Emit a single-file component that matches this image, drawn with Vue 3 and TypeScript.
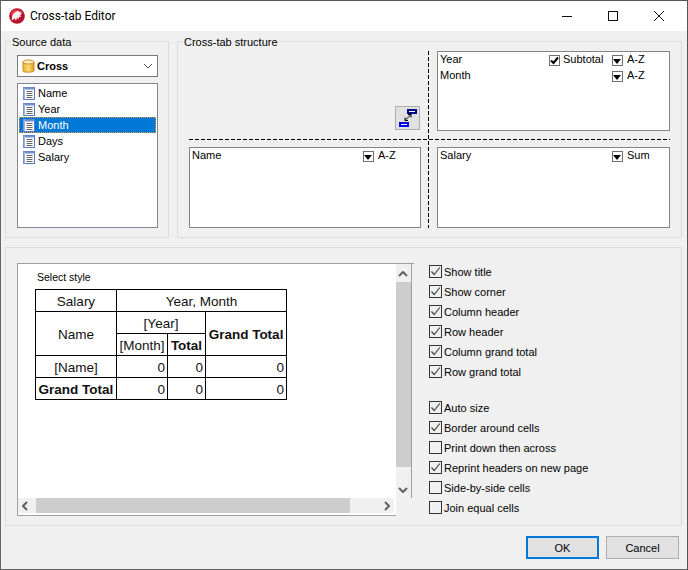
<script setup lang="ts">
const fields: string[] = ['Name', 'Year', 'Month', 'Days', 'Salary']
const groupA: string[] = ['Show title', 'Show corner', 'Column header', 'Row header', 'Column grand total', 'Row grand total']
const groupB: { label: string; on: boolean }[] = [
  { label: 'Auto size', on: true },
  { label: 'Border around cells', on: true },
  { label: 'Print down then across', on: false },
  { label: 'Reprint headers on new page', on: true },
  { label: 'Side-by-side cells', on: false },
  { label: 'Join equal cells', on: false },
]
</script>

<template>
  <div class="window">
    <header class="titlebar">
      <svg class="logo" width="16" height="16" viewBox="0 0 16 16">
        <circle cx="8" cy="8" r="7.8" fill="#b8102a" />
        <circle cx="6.5" cy="6" r="4.5" fill="#e23a4c" />
        <path d="M3 12.5C2 8 5 3 10.5 2.5L9.3 4 13 3.4 11.2 5.3 13.6 5.5 11 7.2 12.6 8.4 9.8 8.9 10 11.5 8.2 9.8 6.8 13 6 10.5 4.5 11.2Z" fill="#fdeeee" />
      </svg>
      <span class="title">Cross-tab Editor</span>
      <div class="winbtns">
        <svg width="12" height="12" viewBox="0 0 12 12"><path d="M1 6.5H11" stroke="#111" fill="none" /></svg>
        <svg width="12" height="12" viewBox="0 0 12 12"><rect x="1.5" y="1.5" width="9" height="9" stroke="#111" fill="none" /></svg>
        <svg width="12" height="12" viewBox="0 0 12 12"><path d="M1 1L11 11M11 1L1 11" stroke="#111" fill="none" /></svg>
      </div>
    </header>

    <main class="body">
      <div class="top">
        <section class="group source">
          <span class="legend">Source data</span>
          <div class="combo">
            <svg width="13" height="15" viewBox="0 0 13 15">
              <defs>
                <linearGradient id="db" x1="0" x2="1" y1="0" y2="0">
                  <stop offset="0" stop-color="#f0b030" />
                  <stop offset="0.5" stop-color="#ffdc78" />
                  <stop offset="1" stop-color="#dd9a20" />
                </linearGradient>
              </defs>
              <path d="M1 3V12C1 13.5 12 13.5 12 12V3Z" fill="url(#db)" stroke="#c88a1c" />
              <ellipse cx="6.5" cy="3" rx="5.5" ry="2" fill="#fff0c0" stroke="#c88a1c" />
            </svg>
            <b>Cross</b>
            <svg class="chev" width="10" height="6" viewBox="0 0 10 6"><path d="M1 1L5 5L9 1" stroke="#555" fill="none" /></svg>
          </div>
          <ul class="fields">
            <li v-for="f in fields" :key="f" :class="{ sel: f === 'Month' }">
              <svg width="12" height="13" viewBox="0 0 12 13">
                <rect x="0.5" y="0.5" width="11" height="12" fill="#fff" stroke="#5a78c0" />
                <rect x="0.5" y="0.5" width="11" height="2" fill="#6d8fd8" />
                <rect x="0.5" y="0.5" width="1.5" height="12" fill="#9db4e6" />
                <path d="M3.5 4.5H9.5M3.5 6.5H9.5M3.5 8.5H9.5M3.5 10.5H9.5" stroke="#666" />
              </svg>
              <span>{{ f }}</span>
            </li>
          </ul>
        </section>

        <section class="group structure">
          <span class="legend">Cross-tab structure</span>
          <div class="cell corner">
            <button class="swap">
              <svg width="22" height="22" viewBox="0 0 22 22">
                <rect x="10" y="2" width="10" height="5" fill="#000080" />
                <rect x="12" y="4" width="6" height="1" fill="#fff" />
                <rect x="2" y="15" width="10" height="5" fill="#0000f0" />
                <rect x="4" y="17" width="6" height="1" fill="#fff" />
                <path d="M8 13.5L14 7.5M11 7.5H14V10.5M8 10.5V13.5H11" stroke="#000" fill="none" />
              </svg>
            </button>
          </div>
          <div class="cell drop">
            <div class="row">
              <span class="name">Year</span>
              <span class="tick"><svg width="11" height="11" viewBox="0 0 11 11"><path d="M2 5.5L4.5 8L9 2.5" stroke="#000" stroke-width="2" fill="none" /></svg></span>
              <span class="sub">Subtotal</span>
              <span class="arrow"></span><span class="val">A-Z</span>
            </div>
            <div class="row">
              <span class="name">Month</span>
              <span class="arrow"></span><span class="val">A-Z</span>
            </div>
          </div>
          <div class="cell drop">
            <div class="row">
              <span class="name">Name</span>
              <span class="arrow"></span><span class="val">A-Z</span>
            </div>
          </div>
          <div class="cell drop">
            <div class="row">
              <span class="name">Salary</span>
              <span class="arrow"></span><span class="val">Sum</span>
            </div>
          </div>
          <i class="dash-v"></i>
          <i class="dash-h"></i>
        </section>
      </div>

      <section class="group options">
        <div class="preview">
          <div class="canvas">
            <div class="caption">Select style</div>
            <table class="sample">
              <colgroup>
                <col style="width: 81px" /><col style="width: 51px" /><col style="width: 38px" /><col style="width: 81px" />
              </colgroup>
              <tbody>
                <tr><td>Salary</td><td colspan="3">Year, Month</td></tr>
                <tr><td rowspan="2">Name</td><td colspan="2">[Year]</td><td rowspan="2"><b>Grand Total</b></td></tr>
                <tr><td>[Month]</td><td><b>Total</b></td></tr>
                <tr><td>[Name]</td><td class="num">0</td><td class="num">0</td><td class="num">0</td></tr>
                <tr><td><b>Grand Total</b></td><td class="num">0</td><td class="num">0</td><td class="num">0</td></tr>
              </tbody>
            </table>
          </div>
          <div class="vbar">
            <svg width="10" height="6" viewBox="0 0 10 6"><path d="M1 5L5 1L9 5" stroke="#606060" stroke-width="2" fill="none" /></svg>
            <div class="vthumb"></div>
            <svg width="10" height="6" viewBox="0 0 10 6"><path d="M1 1L5 5L9 1" stroke="#606060" stroke-width="2" fill="none" /></svg>
          </div>
          <div class="hwrap">
            <div class="hbar">
              <svg width="6" height="10" viewBox="0 0 6 10"><path d="M5 1L1 5L5 9" stroke="#606060" stroke-width="2" fill="none" /></svg>
              <div class="htrack"><div class="hthumb"></div></div>
              <svg width="6" height="10" viewBox="0 0 6 10"><path d="M1 1L5 5L1 9" stroke="#606060" stroke-width="2" fill="none" /></svg>
            </div>
          </div>
        </div>

        <div class="checks">
          <div class="checkgroup">
            <label v-for="c in groupA" :key="c" class="check">
              <span class="box"><svg width="11" height="11" viewBox="0 0 11 11"><path d="M1.5 5.5L4.2 8.5L9.8 1.5" stroke="#444" stroke-width="1.2" fill="none" /></svg></span>
              <span class="lbl">{{ c }}</span>
            </label>
          </div>
          <div class="checkgroup">
            <label v-for="c in groupB" :key="c.label" class="check">
              <span class="box"><svg v-if="c.on" width="11" height="11" viewBox="0 0 11 11"><path d="M1.5 5.5L4.2 8.5L9.8 1.5" stroke="#444" stroke-width="1.2" fill="none" /></svg></span>
              <span class="lbl">{{ c.label }}</span>
            </label>
          </div>
        </div>
      </section>

      <footer class="actions">
        <button class="btn primary">OK</button>
        <button class="btn">Cancel</button>
      </footer>
    </main>
  </div>
</template>

<style>
html, body { margin: 0; background: #f0f0f0; }
</style>

<style scoped>
* { box-sizing: border-box; }
.window {
  width: 688px;
  height: 570px;
  display: flex;
  flex-direction: column;
  background: #f0f0f0;
  border-top: 1px solid #555;
  border-left: 1px solid #666;
  border-right: 1px solid #555;
  border-bottom: 1px solid #666;
  font-family: "Liberation Sans", Arial, sans-serif;
  font-size: 11px;
  color: #000;
  overflow: hidden;
}
.titlebar {
  height: 30px;
  flex: none;
  background: #fff;
  display: flex;
  align-items: center;
  padding-left: 8px;
}
.title { margin-left: 5px; font-family: Roboto, sans-serif; font-size: 12px; }
.winbtns {
  margin-left: auto;
  display: flex;
  gap: 34px;
  padding-right: 22px;
  margin-top: -1px;
}
.body { flex: 1; padding: 10px 5px 0 4px; display: flex; flex-direction: column; }
.top { display: flex; gap: 8px; height: 197px; }
.group { position: relative; border: 1px solid #dcdcdc; }
.legend {
  position: absolute;
  top: -6px;
  left: 5px;
  background: #f0f0f0;
  padding: 0 1px;
  line-height: 13px;
}
.source { width: 164px; padding: 13px 11px 0; }
.combo {
  height: 22px;
  width: 141px;
  border: 1px solid #7a7a7a;
  background: #fff;
  display: flex;
  align-items: center;
  padding-left: 4px;
  gap: 2px;
}
.chev { margin-left: auto; margin-right: 4px; }
.fields {
  list-style: none;
  margin: 6px 0 0;
  padding: 1px;
  width: 141px;
  height: 145px;
  border: 1px solid #828790;
  background: #fff;
}
.fields li {
  height: 16px;
  display: flex;
  align-items: center;
  gap: 3px;
  padding-left: 3px;
  border: 1px solid transparent;
}
.fields li.sel { background: #0078d7; color: #fff; border: 1px dotted #e0a030; }
.structure {
  flex: 1;
  display: grid;
  grid-template-columns: 232px 233px;
  grid-template-rows: 80px 81px;
  column-gap: 16px;
  row-gap: 16px;
  padding: 9px 0 0 11px;
}
.corner { display: flex; align-items: flex-end; justify-content: flex-end; padding: 0 1px 1px 0; }
.swap {
  width: 25px;
  height: 24px;
  padding: 0;
  border: 1px solid #adadad;
  background: #e1e1e1;
  display: flex;
  align-items: center;
  justify-content: center;
}
.drop {
  border: 1px solid #848484;
  background: #fff;
  padding: 0 2px;
}
.row { height: 16px; padding-bottom: 2px; display: flex; align-items: center; }
.name { flex: 1; }
.tick {
  width: 11px;
  height: 11px;
  margin-top: 2px;
  border: 1px solid #707070;
  display: flex;
  align-items: center;
  justify-content: center;
  margin-right: 3px;
}
.tick svg { flex: none; }
.sub { width: 49px; }
.arrow {
  width: 11px;
  height: 11px;
  margin-top: 2px;
  border: 1px solid #707070;
  margin-right: 4px;
  position: relative;
}
.arrow::after {
  content: "";
  position: absolute;
  left: 0;
  top: 3px;
  border-left: 4.5px solid transparent;
  border-right: 4.5px solid transparent;
  border-top: 5px solid #000;
}
.val { width: 40px; }
.dash-v {
  position: absolute;
  left: 250px;
  top: 9px;
  height: 177px;
  width: 1px;
  background: repeating-linear-gradient(to bottom, #000 0 4px, transparent 4px 6px);
}
.dash-h {
  position: absolute;
  left: 11px;
  top: 97px;
  width: 481px;
  height: 1px;
  background: repeating-linear-gradient(to right, #000 0 4px, transparent 4px 6px);
}
.options {
  margin-top: 9px;
  height: 279px;
  padding: 15px 0 0 11px;
  display: flex;
}
.preview {
  width: 397px;
  height: 253px;
  border-top: 1px solid #a0a0a0;
  border-left: 1px solid #a0a0a0;
  display: grid;
  grid-template-columns: 378px 16px;
  grid-template-rows: 234px 18px;
}
.canvas { background: #fff; padding: 7px 0 0 17px; overflow: hidden; }
.caption { font-size: 10.5px; line-height: 13px; margin-bottom: 5px; margin-left: 2px; }
.sample {
  border-collapse: collapse;
  table-layout: fixed;
  width: 251px;
  font-family: "Liberation Sans", Arial, sans-serif;
  font-size: 13.5px;
  color: #111;
}
.sample td {
  border: 1px solid #000;
  height: 22px;
  padding: 2px 2px 0;
  text-align: center;
  white-space: nowrap;
}
.sample td.num { text-align: right; }
.vbar {
  background: #f0f0f0;
  border-right: 1px solid #a0a0a0;
  display: flex;
  flex-direction: column;
  align-items: center;
  padding: 7px 1px 5px 0;
}
.vthumb { width: 15px; height: 185px; background: #cdcdcd; margin: 5px 0 auto; }
.hwrap {
  grid-column: 1;
  background: #fff;
  padding-bottom: 2px;
  border-bottom: 1px solid #a0a0a0;
  padding-right: 2px;
}
.hbar {
  height: 15px;
  background: #f0f0f0;
  display: flex;
  align-items: center;
  padding: 0 4px;
}
.htrack { flex: 1; height: 15px; padding: 0 8px; }
.hthumb { width: 314px; height: 15px; background: #cdcdcd; }
.checks {
  margin-left: 15px;
  margin-top: -2px;
  display: flex;
  flex-direction: column;
  gap: 16px;
}
.checkgroup { display: flex; flex-direction: column; }
.check { height: 20px; display: flex; align-items: center; gap: 2px; }
.lbl { padding-top: 2px; }
.box {
  width: 13px;
  height: 13px;
  border: 1px solid #333;
  display: flex;
  align-items: center;
  justify-content: center;
}
.box svg { flex: none; }
.actions { display: flex; justify-content: flex-end; gap: 7px; padding: 10px 3px 0 0; }
.btn {
  width: 73px;
  height: 23px;
  padding: 0;
  border: 1px solid #adadad;
  background: #e1e1e1;
  font: inherit;
  font-size: 11px;
  color: #000;
}
.btn.primary { border: 2px solid #0078d7; }
</style>
